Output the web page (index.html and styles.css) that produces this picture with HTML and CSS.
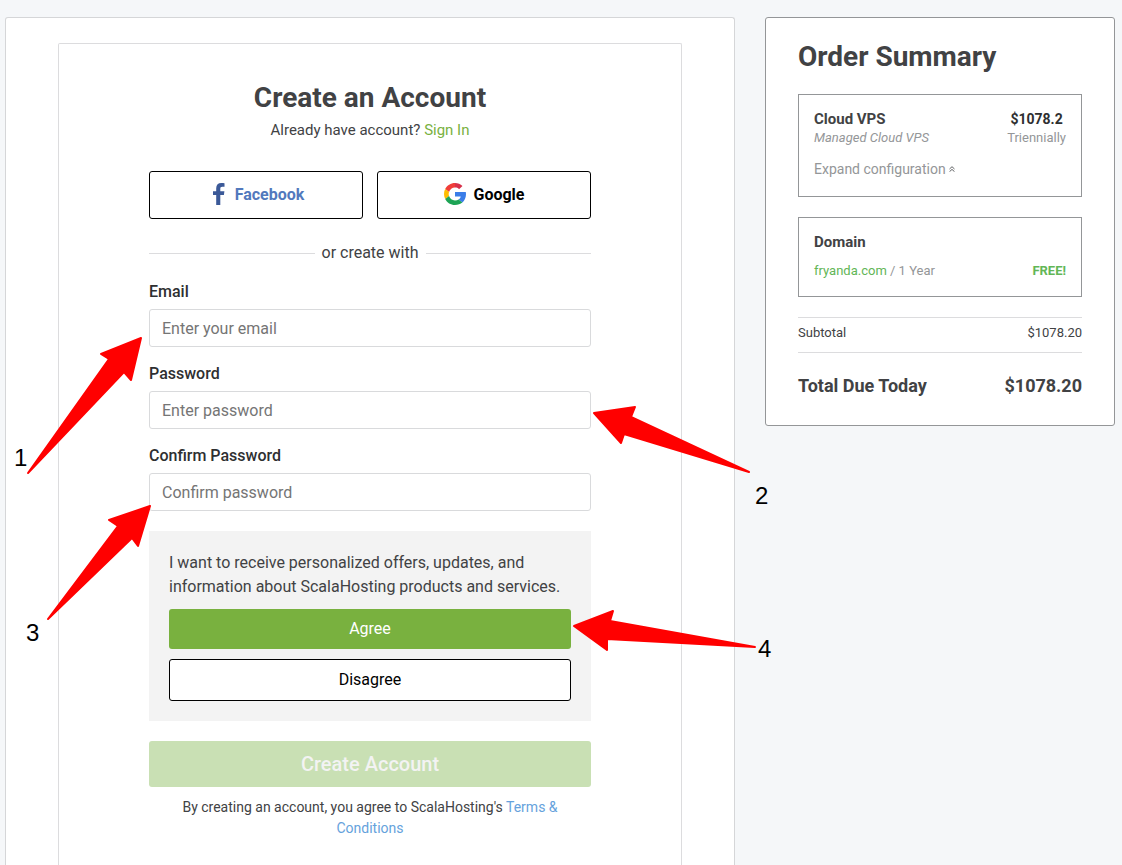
FILE: index.html
```html
<!DOCTYPE html>
<html lang="en">
<head>
  <meta charset="utf-8">
  <title>Create an Account</title>
  <link rel="stylesheet" href="styles.css">
</head>
<body>
  <div class="page">
    <main class="card">
      <form class="panel">
        <h1>Create an Account</h1>
        <p class="signin">Already have account? <a href="#">Sign In</a></p>

        <div class="social">
          <button type="button" class="social-btn facebook">
            <svg width="12" height="22" viewBox="0 0 12 22" aria-hidden="true">
              <path fill="#3b5998" d="M3.2 22V12H0V8.2h3.2V5.2C3.2 1.8 5.2 0 8.3 0c1.5 0 2.8.1 3.2.2v3.5H9.300C7.600 3.700 7.300 4.500 7.300 5.700v2.500h4.100L10.900 12H7.300v10z"/>
            </svg>
            Facebook
          </button>
          <button type="button" class="social-btn google">
            <svg width="22" height="22" viewBox="0 0 48 48" aria-hidden="true">
              <path fill="#f03e3a" d="M24 0C14.620 0 6.510 5.380 2.560 13.220l8.400 6.500C12.900 14 17.740 10 24 10z"/>
              <path fill="#d7304a" d="M24 0v10c3.540 0 6.300 1 8.800 3.400l7.500-7.100C35.900 2.380 30.470 0 24 0z"/>
              <path fill="#3b7de8" d="M47.500 19.500H24v9.800h12.500c-.6 2.900-2.200 5.200-4.600 6.800l8.200 6.400C44.700 38.300 48 32 48 24.500c0-1.700-.2-3.500-.5-5z"/>
              <path fill="#ffbd00" d="M11 28.600c-.5-1.450-.8-2.990-.8-4.600s.27-3.140.8-4.590l-8.440-6.190C.92 16.460 0 20.120 0 24s.92 7.540 2.560 10.780z"/>
              <path fill="#1da455" d="M24 48c6.480 0 12-2 16.100-5.500l-8.200-6.400c-2.100 1.400-4.700 2-7.900 2-6.260 0-11.100-3.900-13-9.500l-8.440 6.180C6.510 42.620 14.620 48 24 48z"/>
            </svg>
            Google
          </button>
        </div>

        <div class="divider">or create with</div>

        <div class="field">
          <label for="email">Email</label>
          <div class="anchor">
            <input type="email" id="email" placeholder="Enter your email">
            <svg class="marker" width="1" height="1">
              <path d="M-8 29L-48 45L-40 50L-121 164L-25 63L-18 71Z"/>
              <text x="-135" y="157">1</text>
            </svg>
          </div>
        </div>
        <div class="field">
          <label for="password">Password</label>
          <div class="anchor">
            <input type="password" id="password" placeholder="Enter password">
            <svg class="marker marker-right" width="1" height="1">
              <path d="M3 22L44 16L40 26L158 81L33 43L30 52Z"/>
              <text x="164" y="113">2</text>
            </svg>
          </div>
        </div>
        <div class="field">
          <label for="confirm">Confirm Password</label>
          <div class="anchor">
            <input type="password" id="confirm" placeholder="Confirm password">
            <svg class="marker" width="1" height="1">
              <path d="M1 33L-40 47L-31 53L-101 146L-17 65L-11 73Z"/>
              <text x="-123" y="168">3</text>
            </svg>
          </div>
        </div>

        <div class="offers">
          <p>I want to receive personalized offers, updates, and information about ScalaHosting products and services.</p>
          <div class="anchor">
            <button type="button" class="agree">Agree</button>
            <svg class="marker marker-right" width="1" height="1">
              <path d="M3 17L42 2L39 12L184 38L36 30L36 41Z"/>
              <text x="187" y="48">4</text>
            </svg>
          </div>
          <button type="button" class="disagree">Disagree</button>
        </div>

        <button type="submit" class="create" disabled>Create Account</button>
        <p class="terms">By creating an account, you agree to ScalaHosting's <a href="#">Terms &amp; Conditions</a></p>
      </form>
    </main>

    <aside class="summary">
      <h2>Order Summary</h2>

      <section class="item">
        <div class="item-row">
          <div>
            <h3>Cloud VPS</h3>
            <p class="plan">Managed Cloud VPS</p>
          </div>
          <div class="price">
            <strong>$1078.2</strong>
            <p>Triennially</p>
          </div>
        </div>
        <a href="#" class="expand">Expand configuration
          <svg width="6" height="6" viewBox="0 0 6 6" aria-hidden="true">
            <path d="M.5 3L3 .7L5.500 3M.5 5.700L3 3.400L5.500 5.700" fill="none" stroke="#606264"/>
          </svg>
        </a>
      </section>

      <section class="item">
        <h3>Domain</h3>
        <div class="item-row domain">
          <p><a href="#">fryanda.com</a> / 1 Year</p>
          <strong>FREE!</strong>
        </div>
      </section>

      <div class="subtotal"><span>Subtotal</span><span>$1078.20</span></div>
      <div class="total"><span>Total Due Today</span><span>$1078.20</span></div>
    </aside>
  </div>
</body>
</html>
```
FILE: styles.css
```css
* {
  box-sizing: border-box;
}

body {
  margin: 0;
  background-color: #f5f7f9;
  color: #414244;
  font-family: Roboto, sans-serif;
  font-size: 16px;
  line-height: 24px;
}

h1, h2, h3, p {
  margin: 0;
}

h1, h2 {
  font-size: 28px;
  line-height: 40px;
}

a {
  text-decoration: none;
}

button, input {
  font: inherit;
  border-radius: 3px;
}

button {
  cursor: pointer;
}

.page {
  display: grid;
  grid-template-columns: 1fr 350px;
  gap: 30px;
  min-height: 100vh;
  padding: 17px 7px 0 5px;
}

.card {
  display: flex;
  padding: 25px 52px 0;
  background-color: #fff;
  border: 1px solid #d5d6d8;
  border-bottom: none;
  border-radius: 3px 3px 0 0;
}

.panel {
  flex: 1;
  padding: 34px 90px 24px;
  border: 1px solid #dcdcde;
  border-bottom: none;
  border-radius: 2px 2px 0 0;
}

.panel h1, .signin, .terms {
  text-align: center;
}

.signin {
  font-size: 15px;
}

.signin a {
  color: #79b13f;
}

/* Social login */
.social {
  display: grid;
  grid-template-columns: 1fr 1fr;
  gap: 14px;
  margin-top: 29px;
}

.social-btn {
  display: flex;
  justify-content: center;
  align-items: center;
  height: 48px;
  padding: 0;
  background-color: #fff;
  border: 1px solid #000;
  color: #000;
  font-weight: bold;
}

.social-btn svg {
  margin-bottom: 2px;
}

.facebook {
  gap: 10px;
  padding-left: 5px;
  color: #5279bd;
}

.google {
  gap: 8px;
}

.divider {
  display: flex;
  align-items: center;
  gap: 7px;
  margin-top: 22px;
}

.divider::before, .divider::after {
  content: "";
  flex: 1;
  border-top: 1px solid #dcdcde;
}

/* Form fields */
.field {
  margin-top: 15px;
}

.field label {
  display: block;
  margin-bottom: 5px;
  color: #2e2f31;
  font-weight: 500;
}

.field input {
  display: block;
  width: 100%;
  height: 38px;
  padding: 0 12px;
  background-color: #fff;
  border: 1px solid #d9dadc;
}

.field input::placeholder {
  color: #757575;
}

.offers {
  display: grid;
  gap: 10px;
  margin: 20px 0;
  padding: 20px;
  background-color: #f3f3f3;
}

.agree, .disagree, .create {
  display: block;
  width: 100%;
  border: none;
}

.agree {
  height: 40px;
  background-color: #79b13f;
  color: #fff;
}

.disagree {
  height: 42px;
  background-color: #fff;
  border: 1px solid #000;
  color: #000;
}

.create {
  height: 46px;
  background-color: #c9e0b4;
  color: #f3f3f3;
  font-size: 20px;
  font-weight: 500;
  cursor: default;
}

.terms {
  margin-top: 10px;
  padding: 0 30px;
  font-size: 14px;
  line-height: 21px;
}

.terms a {
  color: #65a2dc;
}

/* Numbered arrows drawn over the form */
.anchor {
  position: relative;
}

.marker {
  position: absolute;
  top: 0;
  left: 0;
  overflow: visible;
  z-index: 1;
  pointer-events: none;
}

.marker-right {
  left: 100%;
}

.marker path {
  fill: #f00;
  stroke: #f00;
  stroke-width: 2;
  stroke-linejoin: round;
}

.marker text {
  fill: #000;
  font-family: "Liberation Sans", Arial, sans-serif;
  font-size: 24px;
}

/* Order summary */
.summary {
  align-self: start;
  padding: 19px 32px 25px;
  background-color: #fff;
  border: 1px solid #949698;
  border-radius: 3px;
}

.summary h2 {
  margin-bottom: 17px;
}

.item {
  margin-bottom: 20px;
  padding: 14px 15px 16px;
  border: 1px solid #949698;
  color: #949698;
  font-size: 13px;
  line-height: 18px;
}

.item h3 {
  color: #414244;
  font-size: 15px;
  line-height: 20px;
}

.item-row {
  display: flex;
  justify-content: space-between;
}

.plan {
  font-style: italic;
}

.price {
  text-align: center;
}

.price strong {
  color: #2e2f31;
  font-size: 14px;
  line-height: 20px;
}

.expand {
  display: flex;
  align-items: center;
  gap: 3px;
  margin: 12px 0 1px;
  color: #949698;
  font-size: 14px;
  line-height: 20px;
}

.domain {
  margin-top: 10px;
}

.domain a, .domain strong {
  color: #62b656;
}

.subtotal, .total {
  display: flex;
  justify-content: space-between;
}

.subtotal {
  padding-bottom: 4px;
  border-top: 1px solid #dcdcde;
  border-bottom: 1px solid #dcdcde;
  font-size: 13px;
  line-height: 30px;
}

.total {
  margin-top: 19px;
  font-size: 18px;
  font-weight: bold;
  line-height: 28px;
}
```
